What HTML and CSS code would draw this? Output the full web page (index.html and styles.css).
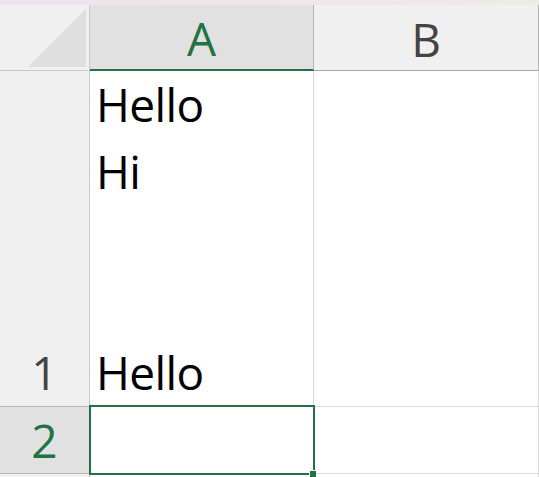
FILE: index.html
```html
<!DOCTYPE html>
<html>
<head>
<meta charset="utf-8">
<link rel="stylesheet" href="styles.css">
</head>
<body>
<div class="strip"></div>
<div class="sheet">
  <div class="corner"><div class="tri"></div></div>
  <div class="colhead sel">A</div>
  <div class="colhead">B</div>

  <div class="rowhead bottom">1</div>
  <div class="cell tall"><div class="lines">Hello<br>Hi<br>&nbsp;<br>&nbsp;<br>Hello</div></div>
  <div class="cell"></div>

  <div class="rowhead sel">2</div>
  <div class="cell active"><span class="handle"></span></div>
  <div class="cell"></div>

  <div class="rowhead"></div>
  <div class="cell"></div>
  <div class="cell"></div>
</div>
</body>
</html>
```

FILE: styles.css
```css
html, body {
  margin: 0;
  padding: 0;
  background: #ffffff;
  overflow: hidden;
}
body {
  width: 539px;
  height: 477px;
  font-family: "Open Sans", "Noto Sans", sans-serif;
}
.strip {
  height: 5px;
  background: linear-gradient(90deg, #efe3ee 0%, #efe6ec 50%, #efebe4 100%);
}
.sheet {
  display: grid;
  grid-template-columns: 90px 224px 225px;
  grid-template-rows: 66px 336px 67px 20px;
}
.sheet > div {
  box-sizing: border-box;
}
.corner {
  background: #f0f0f0;
  border-right: 1px solid #c8c8c8;
  border-bottom: 1px solid #c8c8c8;
  position: relative;
}
.tri {
  position: absolute;
  left: 28px;
  top: 4px;
  width: 58px;
  height: 58px;
  background: #dfdfdf;
  clip-path: polygon(100% 0, 100% 100%, 0 100%);
}
.colhead {
  background: #f0f0f0;
  border-right: 1px solid #b4b4b4;
  border-bottom: 1px solid #a8a8a8;
  display: flex;
  align-items: flex-end;
  justify-content: center;
  font-size: 46px;
  line-height: 62px;
  color: #444444;
}
.colhead.sel {
  background: #e1e1e1;
  border-bottom: 2px solid #217346;
  color: #217346;
}
.rowhead {
  background: #f0f0f0;
  border-right: 1px solid #c8c8c8;
  border-bottom: 1px solid #b8b8b8;
  display: flex;
  align-items: center;
  justify-content: center;
  font-size: 46px;
  line-height: 67px;
  color: #444444;
}
.rowhead.bottom {
  align-items: flex-end;
}
.rowhead.sel {
  background: #e1e1e1;
  color: #217346;
}
.cell {
  border-right: 1px solid #dadada;
  border-bottom: 1px solid #dadada;
  position: relative;
}
.cell.tall {
  display: flex;
  align-items: flex-end;
  padding-left: 6px;
  font-size: 46px;
  line-height: 67px;
  letter-spacing: -0.6px;
  color: #000000;
}
.cell.active::after {
  content: "";
  position: absolute;
  left: -1px;
  top: -2px;
  right: -2px;
  bottom: -2px;
  border: 2px solid #217346;
  pointer-events: none;
}
.handle {
  position: absolute;
  right: -3px;
  bottom: -4px;
  width: 6px;
  height: 6px;
  background: #217346;
  border-left: 1px solid #ffffff;
  border-top: 1px solid #ffffff;
  z-index: 2;
}
```
